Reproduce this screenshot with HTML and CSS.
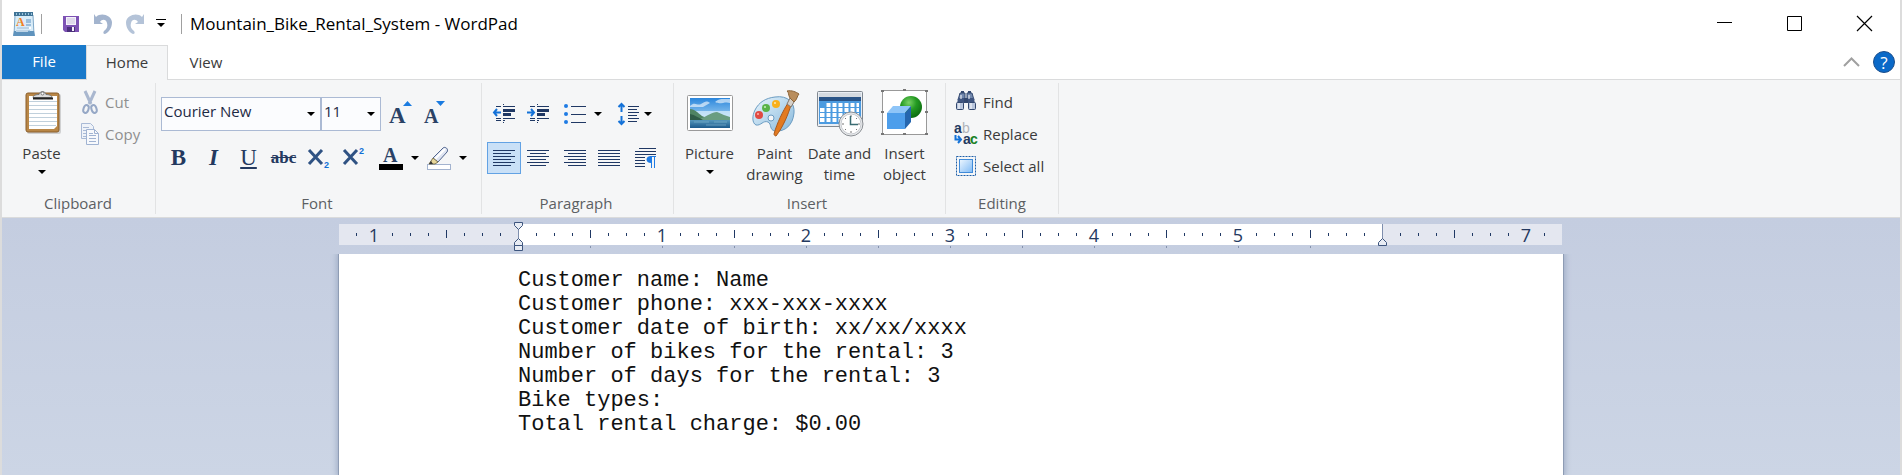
FILE: index.html
```
<!DOCTYPE html>
<html lang="en">
<head>
    <meta charset="UTF-8">
    <meta name="viewport" content="width=device-width, initial-scale=1.0">
    <title>Mountain_Bike_Rental_System - WordPad</title>
    <link rel="stylesheet" href="styles.css">
</head>
<body>
    <div class="window">
        <header class="titlebar">
            <svg class="app-icon" width="22" height="26" viewBox="0 0 22 26">
                <path d="M2 4h18l1 20H1z" fill="#d9ecf8" stroke="#7fa8c8"/>
                <path d="M1 20h20l1 5H0z" fill="#5f93bd"/>
                <rect x="1" y="1" width="19" height="4" fill="#3f7396"/>
                <path d="M3 3h1M6 3h1M9 3h1M12 3h1M15 3h1M18 3h1" stroke="#9cc4dd" stroke-width="2"/>
                <text x="3" y="15" font-family="Liberation Serif" font-weight="bold" font-size="12" fill="#f08223">A</text>
                <path d="M13 9h5M13 11h5M13 14h5" stroke="#5b8fc0"/>
                <path d="M4 17h14M3 20h12" stroke="#fff" stroke-width="2"/>
                <path d="M4 17h12M3 20h14" stroke="#7ba9cf"/>
            </svg>
            <span class="divider"></span>
            <button class="quick" aria-label="Save">
                <svg width="16" height="16" viewBox="0 0 16 16">
                    <path d="M0 0h16v16H2l-2-2z" fill="#7d52b4"/>
                    <rect x="3" y="1" width="10" height="8" fill="#f4f1fa"/>
                    <path d="M4 3h8M4 5h8M4 7h8" stroke="#c9c0dc"/>
                    <rect x="4" y="11" width="8" height="5" fill="#4b2f7c"/>
                    <rect x="9" y="11" width="2" height="4" fill="#f4f1fa"/>
                </svg>
            </button>
            <button class="quick" aria-label="Undo">
                <svg width="20" height="22" viewBox="0 0 20 22">
                    <path d="M1 1l2 3c5-5 15-2 16 5 0 6-3 10-7 12-2 0-2-2-1-3 3-2 4-5 3-8-1-4-5-4-7-1l3 2H1z" fill="#a3b4ce"/>
                </svg>
            </button>
            <button class="quick" aria-label="Redo">
                <svg width="20" height="22" viewBox="0 0 20 22">
                    <path d="M19 1l-2 3C12-1 2 2 1 9c0 6 3 10 7 12 2 0 2-2 1-3-3-2-4-5-3-8 1-4 5-4 7-1l-3 2h9z" fill="#b4c3d8"/>
                </svg>
            </button>
            <button class="quick quick-more" aria-label="Customize Quick Access Toolbar">
                <svg width="10" height="9" viewBox="0 0 10 9"><path d="M0 0h10v1H0zM1 4h8L5 8z"/></svg>
            </button>
            <span class="divider"></span>
            <h1 class="title">Mountain_Bike_Rental_System - WordPad</h1>
            <div class="window-buttons">
                <button aria-label="Minimize"><svg width="16" height="16" viewBox="0 0 16 16"><path d="M0 6.500h15" stroke="#000"/></svg></button>
                <button aria-label="Maximize"><svg width="16" height="16" viewBox="0 0 16 16"><path d="M.5.5h14v14H.5z" fill="none" stroke="#000"/></svg></button>
                <button aria-label="Close"><svg width="16" height="16" viewBox="0 0 16 16"><path d="M0 0l15 15M15 0L0 15" stroke="#000" stroke-width="1.200"/></svg></button>
            </div>
        </header>

        <nav class="tabs">
            <button class="tab tab-file">File</button>
            <button class="tab tab-active">Home</button>
            <button class="tab">View</button>
            <div class="tab-tools">
                <button aria-label="Minimize the Ribbon"><svg width="17" height="10" viewBox="0 0 17 10"><path d="M1 9l7.500-7.500L16 9" fill="none" stroke="#a0a0a0" stroke-width="2"/></svg></button>
                <button class="help" aria-label="Help">?</button>
            </div>
        </nav>

        <div class="ribbon">
            <section class="group group-clipboard">
                <div class="group-body">
                    <button class="big">
                        <svg width="48" height="48" viewBox="0 0 48 48">
                            <rect x="9" y="5" width="34" height="40" rx="2" fill="#000" opacity=".15"/>
                            <rect x="8" y="4" width="33" height="39" rx="2" fill="#b98747" stroke="#8a5f2c"/>
                            <path d="M11 7h28v30l-3 3H11z" fill="#fff"/>
                            <path d="M11 12.500h28M11 16.500h28M11 20.500h28M11 24.500h28M11 28.500h28M11 32.500h28M11 36.500h27" stroke="#c0d0dc"/>
                            <path d="M15 8.500c0-2 3-3 6-3 1-4 6-4 7 0 3 0 6 1 6 3z" fill="#ddd" stroke="#777"/>
                            <circle cx="24.500" cy="4.500" r="1.500" fill="#fff" stroke="#777"/>
                            <path d="M15 9.500h20" stroke="#222" stroke-width="2"/>
                        </svg>
                        <span>Paste</span>
                        <svg class="arrow" width="8" height="4" viewBox="0 0 8 4"><path d="M0 0h8L4 4z"/></svg>
                    </button>
                    <div class="small-list">
                        <button class="small" disabled>
                            <svg width="20" height="24" viewBox="0 0 20 24">
                                <path d="M5 1l6 13M15 1L9 14" stroke="#a9b7cf" stroke-width="3"/>
                                <ellipse cx="6" cy="19" rx="2.500" ry="4" transform="rotate(20 6 19)" fill="none" stroke="#96a8c6" stroke-width="2"/>
                                <ellipse cx="14" cy="19" rx="2.500" ry="4" transform="rotate(-20 14 19)" fill="none" stroke="#96a8c6" stroke-width="2"/>
                            </svg>
                            Cut
                        </button>
                        <button class="small" disabled>
                            <svg width="20" height="24" viewBox="0 0 20 24">
                                <path d="M1.500 1.500h9l3 3v12h-12z" fill="#eff3f9" stroke="#a9bad6"/>
                                <path d="M3 5.500h6M3 8.500h5M3 11.500h5M3 14.500h5" stroke="#a9bad6"/>
                                <path d="M6.500 7.500h8l4 4v11h-12z" fill="#f7f9fc" stroke="#a0b3d2"/>
                                <path d="M14.500 7.500v4h4" fill="none" stroke="#a0b3d2"/>
                                <path d="M9 11.500h4M9 13.500h7M9 16.500h7M9 19.500h7" stroke="#a0b3d2"/>
                            </svg>
                            Copy
                        </button>
                    </div>
                </div>
                <h2 class="group-label">Clipboard</h2>
            </section>

            <section class="group group-font">
                <div class="group-rows">
                    <div class="row">
                        <div class="combo combo-family">
                            <select aria-label="Font family"><option>Courier New</option></select>
                            <svg class="arrow" width="8" height="4" viewBox="0 0 8 4"><path d="M0 0h8L4 4z"/></svg>
                        </div>
                        <div class="combo combo-size">
                            <select aria-label="Font size"><option>11</option></select>
                            <svg class="arrow" width="8" height="4" viewBox="0 0 8 4"><path d="M0 0h8L4 4z"/></svg>
                        </div>
                        <button class="tool" aria-label="Grow font">
                            <svg width="26" height="28" viewBox="0 0 26 28">
                                <text x="1" y="23" font-family="Liberation Serif" font-weight="bold" font-size="23" fill="#2a4266">A</text>
                                <path d="M15 6h9l-4.500-5z" fill="#1a7be0"/>
                            </svg>
                        </button>
                        <button class="tool" aria-label="Shrink font">
                            <svg width="26" height="28" viewBox="0 0 26 28">
                                <text x="1" y="23" font-family="Liberation Serif" font-weight="bold" font-size="20" fill="#2a4266">A</text>
                                <path d="M13 1h9l-4.500 5z" fill="#1a7be0"/>
                            </svg>
                        </button>
                    </div>
                    <div class="row">
                        <button class="tool letter bold">B</button>
                        <button class="tool letter italic">I</button>
                        <button class="tool letter underline">U</button>
                        <button class="tool letter strike">abc</button>
                        <button class="tool" aria-label="Subscript">
                            <svg width="24" height="26" viewBox="0 0 24 26">
                                <path d="M2 5l13 14M15 5L2 19" stroke="#2f5283" stroke-width="3"/>
                                <text x="17" y="23" font-family="Liberation Sans" font-weight="bold" font-size="9" fill="#0f6fd6">2</text>
                            </svg>
                        </button>
                        <button class="tool" aria-label="Superscript">
                            <svg width="24" height="26" viewBox="0 0 24 26">
                                <path d="M2 5l13 14M15 5L2 19" stroke="#2f5283" stroke-width="3"/>
                                <text x="17" y="9" font-family="Liberation Sans" font-weight="bold" font-size="9" fill="#0f6fd6">2</text>
                            </svg>
                        </button>
                        <button class="split split-color" aria-label="Text color">
                            <svg width="24" height="26" viewBox="0 0 24 26">
                                <text x="4" y="17" font-family="Liberation Serif" font-weight="bold" font-size="20" fill="#2a4266">A</text>
                                <rect y="19" width="24" height="6"/>
                            </svg>
                            <svg class="arrow" width="8" height="4" viewBox="0 0 8 4"><path d="M0 0h8L4 4z"/></svg>
                        </button>
                        <button class="split" aria-label="Text highlight color">
                            <svg width="24" height="26" viewBox="0 0 24 26">
                                <rect x=".5" y="19.500" width="23" height="5" fill="#fff" stroke="#a3b3cf"/>
                                <path d="M6 13L16 3c2-2 6 1 4 4l-9 10z" fill="#dfe5f2" stroke="#51658f"/>
                                <path d="M8 14L18 4" stroke="#fff" stroke-width="2"/>
                                <path d="M6 13l5 4-3 2H2z" fill="#e8d79a" stroke="#7a7350"/>
                                <path d="M2 19l2-3 2 3z" fill="#333"/>
                            </svg>
                            <svg class="arrow" width="8" height="4" viewBox="0 0 8 4"><path d="M0 0h8L4 4z"/></svg>
                        </button>
                    </div>
                </div>
                <h2 class="group-label">Font</h2>
            </section>

            <section class="group group-paragraph">
                <div class="group-rows">
                    <div class="row">
                        <button class="tool" aria-label="Decrease indent">
                            <svg width="22" height="20" viewBox="0 0 22 20">
                                <path d="M3 2.500h5M10 2.500h12M10 14.500h12M3 14.500h5M3 16.500h5M10 16.500h2M10 .5h1M10 18.500h1" stroke="#1f3864"/>
                                <path d="M10 5h12v3H10zM10 9h8v3h-8z" fill="#1f3864"/>
                                <path d="M8 8.500H1M4 5L1 8.500 4 12" fill="none" stroke="#1472d8" stroke-width="2"/>
                            </svg>
                        </button>
                        <button class="tool" aria-label="Increase indent">
                            <svg width="22" height="20" viewBox="0 0 22 20">
                                <path d="M3 2.500h5M10 2.500h12M10 14.500h12M3 14.500h5M3 16.500h5M10 16.500h2M10 .5h1M10 18.500h1" stroke="#1f3864"/>
                                <path d="M10 5h12v3H10zM10 9h8v3h-8z" fill="#1f3864"/>
                                <path d="M0 8.500h7M4 5l3 3.500L4 12" fill="none" stroke="#1472d8" stroke-width="2"/>
                            </svg>
                        </button>
                        <button class="split split-list" aria-label="Start a list">
                            <svg width="22" height="20" viewBox="0 0 22 20">
                                <path d="M7 2.500h15M7 10.500h15M7 18.500h15" stroke="#1f3864"/>
                                <g fill="#1e7be4"><circle cx="2" cy="2" r="2"/><circle cx="2" cy="10" r="2"/><circle cx="2" cy="18" r="2"/></g>
                            </svg>
                            <svg class="arrow" width="8" height="4" viewBox="0 0 8 4"><path d="M0 0h8L4 4z"/></svg>
                        </button>
                        <button class="split split-spacing" aria-label="Line spacing">
                            <svg width="22" height="22" viewBox="0 0 22 22">
                                <path d="M10 3.500h11M10 6.500h9M10 9.500h11M10 12.500h9M10 15.500h11M10 18.500h9" stroke="#1f3864"/>
                                <path d="M3.500 9V1M.5 4l3-3 3 3M3.500 13v8M.5 18l3 3 3-3" fill="none" stroke="#1472d8" stroke-width="2"/>
                            </svg>
                            <svg class="arrow" width="8" height="4" viewBox="0 0 8 4"><path d="M0 0h8L4 4z"/></svg>
                        </button>
                    </div>
                    <div class="row">
                        <button class="tool pressed" aria-label="Align left">
                            <svg width="22" height="18" viewBox="0 0 22 18"><path d="M0 1.500h22M0 4.500h18M0 7.500h22M0 10.500h18M0 13.500h22M0 16.500h18" stroke="#1f3864"/></svg>
                        </button>
                        <button class="tool" aria-label="Center">
                            <svg width="22" height="18" viewBox="0 0 22 18"><path d="M0 1.500h22M3 4.500h16M0 7.500h22M3 10.500h16M0 13.500h22M3 16.500h16" stroke="#1f3864"/></svg>
                        </button>
                        <button class="tool tool-apart" aria-label="Align right">
                            <svg width="22" height="18" viewBox="0 0 22 18"><path d="M0 1.500h22M4 4.500h18M0 7.500h22M4 10.500h18M0 13.500h22M4 16.500h18" stroke="#1f3864"/></svg>
                        </button>
                        <button class="tool" aria-label="Justify">
                            <svg width="22" height="18" viewBox="0 0 22 18"><path d="M0 1.500h22M0 4.500h22M0 7.500h22M0 10.500h22M0 13.500h22M0 16.500h22" stroke="#1f3864"/></svg>
                        </button>
                        <button class="tool tool-apart" aria-label="Paragraph">
                            <svg width="22" height="22" viewBox="0 0 22 22">
                                <path d="M4 1.500h17M0 4.500h21M0 7.500h21M0 10.500h10M0 13.500h10M0 16.500h10M0 19.500h10" stroke="#1f3864"/>
                                <path d="M21 9.500h-6" stroke="#1e7be4"/><path d="M16.500 9v12M19.500 9v12" stroke="#1e7be4"/>
                                <path d="M16 9v7c-6 0-6-7 0-7z" fill="#1e7be4"/>
                            </svg>
                        </button>
                    </div>
                </div>
                <h2 class="group-label">Paragraph</h2>
            </section>

            <section class="group group-insert">
                <div class="group-body">
                    <button class="big">
                        <svg width="48" height="48" viewBox="0 0 48 48">
                            <defs>
                                <linearGradient id="sky" x1="0" y1="0" x2="0" y2="1"><stop offset="0" stop-color="#2a86dc"/><stop offset="1" stop-color="#d5f0fb"/></linearGradient>
                                <linearGradient id="sea" x1="0" y1="0" x2="0" y2="1"><stop offset="0" stop-color="#5d9fc2"/><stop offset="1" stop-color="#1c5a8c"/></linearGradient>
                            </defs>
                            <rect x="1.500" y="6.500" width="45" height="35" rx="1" fill="#fff" stroke="#9a9a9a"/>
                            <rect x="4" y="9" width="40" height="30" fill="url(#sky)"/>
                            <path d="M4 17c5-5 7 0 11-2s5-4 9-1l-7 4H4zM29 13c4-4 8-3 15-3v4c-5-2-10 2-15-1z" fill="#fff" opacity=".6"/>
                            <path d="M4 22h40v7H4z" fill="#eefaff" opacity=".6"/>
                            <rect x="4" y="30" width="40" height="9" fill="url(#sea)"/>
                            <path d="M4 20c5 0 8 4 12 7l9 4H4z" fill="#4f8463"/>
                            <path d="M14 30c7-3 12-7 17-7 5 2 9 4 13 5v3H14z" fill="#6a9d80"/>
                            <path d="M4 25c5 1 9 4 13 6H4z" fill="#2f5c48"/>
                            <path d="M8 33h15M20 36h20M28 33h13" stroke="#86bad2" opacity=".6"/>
                        </svg>
                        <span>Picture</span>
                        <svg class="arrow" width="8" height="4" viewBox="0 0 8 4"><path d="M0 0h8L4 4z"/></svg>
                    </button>
                    <button class="big">
                        <svg width="48" height="48" viewBox="0 0 48 48">
                            <defs><linearGradient id="palette" x1="0" y1="0" x2="1" y2="1"><stop offset="0" stop-color="#eaf6fd"/><stop offset="1" stop-color="#86b8dc"/></linearGradient></defs>
                            <path d="M24 8c13-2 20 6 19 16-1 12-9 19-19 18-6-1-3-7-7-9-5-2-7 4-12 3-4-2-4-9-1-15C8 13 15 9 24 8z" fill="url(#palette)" stroke="#6b9cc2"/>
                            <circle cx="20" cy="29" r="3" fill="#f5f6f8" stroke="#6b9cc2"/>
                            <circle cx="8" cy="26" r="4" fill="#e04a42"/><circle cx="7" cy="25" r="1" fill="#ffb5ae"/>
                            <circle cx="15" cy="19" r="4" fill="#58b348"/><circle cx="14" cy="18" r="1" fill="#c8efbd"/>
                            <circle cx="25" cy="15" r="4" fill="#f8b01c"/><circle cx="24" cy="14" r="1" fill="#ffeab0"/>
                            <path d="M37 14l3 2c-3 10-8 22-15 31-1 0-2-1-2-2 3-11 9-23 14-31z" fill="#e27a20" stroke="#a9581b"/>
                            <path d="M36 15l4 3 3-5-4-4z" fill="#d6d0c8" stroke="#80756b"/>
                            <path d="M39 9c-2-3-1-6-3-7 5-1 9 1 12 3-2 2-2 6-5 8z" fill="#b98d5c" stroke="#8b6439"/>
                        </svg>
                        <span>Paint<br>drawing</span>
                    </button>
                    <button class="big">
                        <svg width="48" height="48" viewBox="0 0 48 48">
                            <rect x="1.500" y="2.500" width="45" height="35" rx="1" fill="#e9eef4" stroke="#808890"/>
                            <rect x="3" y="4" width="42" height="4" fill="#d4dae1"/>
                            <rect x="3" y="8" width="42" height="4" fill="#295488"/>
                            <rect x="3" y="12" width="42" height="23" fill="#4c9be0"/>
                            <path d="M10 16h33M4 21h39M4 26h39M4 31h39" stroke="#fff" stroke-width="4"/>
                            <path d="M9.500 13v22M15.500 13v22M21.500 13v22M27.500 13v22M33.500 13v22M39.500 13v22" stroke="#4c9be0" stroke-width="2"/>
                            <circle cx="35" cy="35" r="12" fill="#e8eaec" stroke="#8b8f94"/>
                            <circle cx="35" cy="35" r="10" fill="#fff" stroke="#c8cbd0"/>
                            <path d="M35 26v2M35 42v2M26 35h2M42 35h2M29 29l1 1M41 29l-1 1M29 41l1-1M41 41l-1-1" stroke="#777"/>
                            <path d="M34.500 27v8.500H42" fill="none" stroke="#3a6b72" stroke-width="1.500"/>
                        </svg>
                        <span>Date and<br>time</span>
                    </button>
                    <button class="big">
                        <svg width="48" height="48" viewBox="0 0 48 48">
                            <defs><radialGradient id="ball" cx=".4" cy=".3" r=".7"><stop offset="0" stop-color="#7bd267"/><stop offset=".5" stop-color="#249a22"/><stop offset="1" stop-color="#0e6e12"/></radialGradient></defs>
                            <rect x="1.500" y="1.500" width="44" height="44" fill="#fff" stroke="#999"/>
                            <path d="M0 1h3v2H0zM22 0h3v2h-3zM44 1h3v2h-3zM0 22h3v2H0zM44 22h3v2h-3zM0 44h3v2H0zM22 44h3v2h-3zM44 44h3v2h-3z" fill="#777"/>
                            <circle cx="30" cy="18" r="11" fill="url(#ball)"/>
                            <path d="M6 24l6-7h18l-6 7z" fill="#8ec5f8"/>
                            <path d="M6 24h18v16H6z" fill="#4d9eeb"/>
                            <path d="M24 24l6-7v16l-6 7z" fill="#2566ae"/>
                        </svg>
                        <span>Insert<br>object</span>
                    </button>
                </div>
                <h2 class="group-label">Insert</h2>
            </section>

            <section class="group group-editing">
                <div class="group-body">
                    <div class="small-list">
                        <button class="small">
                            <svg width="24" height="24" viewBox="0 0 24 24">
                                <path d="M6 3h5v7H4zM13 3h5l2 7h-7z" fill="#7288ad" stroke="#33486f"/>
                                <path d="M7 1h3v2H7zM14 1h3v2h-3zM10 8h4v5h-4z" fill="#33486f"/>
                                <path d="M4 8h6v6H3zM14 8h6l1 6h-7z" fill="#3f5580"/>
                                <rect x="2.500" y="12.500" width="7" height="7" rx="1" fill="#b9c6dd" stroke="#33486f"/>
                                <rect x="14.500" y="12.500" width="7" height="7" rx="1" fill="#b9c6dd" stroke="#33486f"/>
                                <path d="M5 13v6M17 13v6M7 5v4M15 5v4" stroke="#fff"/>
                            </svg>
                            Find
                        </button>
                        <button class="small">
                            <svg width="24" height="28" viewBox="0 0 24 28" font-family="Liberation Sans" font-weight="bold" font-size="14">
                                <text x="0" y="13" fill="#24395f">a</text>
                                <text x="8" y="13" fill="#b0b3b9" font-weight="normal">b</text>
                                <text x="9" y="24" fill="#24395f">a</text>
                                <text x="16" y="24" fill="#188024">c</text>
                                <path d="M1.500 15v4.500H7M4 16l3 3.500L4 23" fill="none" stroke="#1472d8" stroke-width="2"/>
                            </svg>
                            Replace
                        </button>
                        <button class="small">
                            <svg width="24" height="24" viewBox="0 0 24 24">
                                <defs><linearGradient id="selection" x1="0" y1="0" x2="1" y2="1"><stop offset="0" stop-color="#eef7ff"/><stop offset="1" stop-color="#7fbaf5"/></linearGradient></defs>
                                <rect x="2.500" y="2.500" width="19" height="19" fill="none" stroke="#1d5fa8" stroke-dasharray="2 1"/>
                                <rect x="5.500" y="5.500" width="13" height="13" fill="url(#selection)" stroke="#3f8ad8"/>
                            </svg>
                            Select all
                        </button>
                    </div>
                </div>
                <h2 class="group-label">Editing</h2>
            </section>
        </div>

        <main class="workspace">
            <div class="ruler">
                <svg width="1224" height="35" viewBox="0 0 1224 35">
                    <defs>
                        <!-- one inch is 144 units, origin at the left margin -->
                        <pattern id="inch" x="179" width="144" height="35" patternUnits="userSpaceOnUse">
                            <path d="M18.500 14v3M36.500 14v3M54.500 14v3M72.500 11v8M90.500 14v3M108.500 14v3M126.500 14v3" stroke="#1f3864"/>
                        </pattern>
                        <pattern id="tabstops" x="179" width="72" height="35" patternUnits="userSpaceOnUse">
                            <path d="M.5 27v2" stroke="#8492ad"/>
                        </pattern>
                    </defs>
                    <rect y="5" width="1223" height="21" fill="#e4e7f0"/>
                    <rect x="179" y="5" width="864" height="21" fill="#fff"/>
                    <rect x="8" y="5" width="1206" height="21" fill="url(#inch)"/>
                    <rect x="200" y="26" width="830" height="5" fill="url(#tabstops)"/>
                    <g class="ruler-numbers">
                        <text x="35" y="23">1</text>
                        <text x="323" y="23">1</text>
                        <text x="467" y="23">2</text>
                        <text x="611" y="23">3</text>
                        <text x="755" y="23">4</text>
                        <text x="899" y="23">5</text>
                        <text x="1187" y="23">7</text>
                    </g>
                    <path d="M179.500 9v12M1043.500 5v16" stroke="#7f8fae"/>
                    <g fill="#e8ecf4" stroke="#3d557e">
                        <path d="M175.500 3.500h8v3l-4 4-4-4z"/>
                        <path d="M175.500 26.500v-3l4-4 4 4v3z"/>
                        <path d="M175.500 26.500h8v5h-8z"/>
                        <path d="M1039.500 26.500v-3l4-4 4 4v3z"/>
                    </g>
                </svg>
            </div>
            <article class="page" contenteditable="true" spellcheck="false">
                <p>Customer name: Name</p>
                <p>Customer phone: xxx-xxx-xxxx</p>
                <p>Customer date of birth: xx/xx/xxxx</p>
                <p>Number of bikes for the rental: 3</p>
                <p>Number of days for the rental: 3</p>
                <p>Bike types:</p>
                <p>Total rental charge: $0.00</p>
            </article>
        </main>
    </div>
</body>
</html>
```

FILE: styles.css
```
* {
    box-sizing: border-box;
}
body {
    margin: 0;
    font-family: "Open Sans", "Noto Sans", sans-serif;
    font-size: 15px;
    color: #3b3b3b;
    background: #fff;
}
button {
    display: flex;
    align-items: center;
    justify-content: center;
    padding: 0;
    border: none;
    background: none;
    font: inherit;
    color: inherit;
}
svg {
    display: block;
    flex: none;
    overflow: visible;
}
.window {
    display: flex;
    flex-direction: column;
    height: 100vh;
    overflow: hidden;
    border-left: 2px solid #dcdcdc;
    border-right: 2px solid #dcdcdc;
}

/* title bar */
.titlebar {
    display: flex;
    align-items: center;
    height: 45px;
    padding: 2px 0 0 11px;
}
.divider {
    width: 1px;
    height: 20px;
    background: #a0a0a0;
}
.app-icon {
    margin-right: 6px;
}
.quick {
    width: 32px;
}
.divider + .quick {
    margin-left: 13px;
}
.quick-more {
    width: 20px;
    margin-right: 10px;
}
.title {
    flex: 1;
    margin: 0;
    padding-left: 8px;
    font-size: 17px;
    font-weight: normal;
    line-height: 24px;
    color: #000;
}
.window-buttons {
    display: flex;
}
.window-buttons button {
    width: 70px;
    height: 40px;
}

/* tabs */
.tabs {
    display: flex;
    height: 35px;
    border-bottom: 1px solid #dadbdc;
}
.tab {
    width: 76px;
    height: 35px;
    padding-bottom: 2px;
}
.tab-file {
    width: 84px;
    height: 34px;
    background: #1979ca;
    color: #fff;
}
.tab-active {
    width: 82px;
    border: 1px solid #dadbdc;
    border-bottom: none;
    background: #f5f6f7;
}
.tab-tools {
    display: flex;
    align-items: center;
    gap: 13px;
    margin-left: auto;
    padding-right: 5px;
}
.help {
    width: 22px;
    height: 22px;
    border-radius: 50%;
    border: 1px solid #1d4f8c;
    background: #0a69c8;
    color: #fff;
    font-size: 17px;
}

/* ribbon */
.ribbon {
    display: flex;
    height: 138px;
    flex: none;
    padding: 3px 0;
    background: #f5f6f7;
    border-bottom: 1px solid #dadbdc;
}
.group {
    display: flex;
    flex-direction: column;
    border-right: 1px solid #e2e3e4;
}
.group-clipboard {
    width: 154px;
    padding-left: 7px;
}
.group-font {
    width: 326px;
    padding-left: 5px;
}
.group-paragraph {
    width: 192px;
    padding-left: 5px;
}
.group-insert {
    width: 272px;
    padding-left: 3px;
}
.group-editing {
    width: 113px;
    padding-left: 8px;
}
.group-body {
    display: flex;
    flex: 1;
    padding-top: 3px;
}
.group-label {
    margin: 0;
    padding-right: 8px;
    font-size: 15px;
    font-weight: normal;
    line-height: 22px;
    text-align: center;
    color: #5c5f63;
}
.big {
    flex-direction: column;
    justify-content: flex-start;
    width: 65px;
    padding-top: 3px;
    line-height: 21px;
}
.big span {
    margin-top: 6px;
}
.big .arrow {
    margin-top: 6px;
}
.small-list {
    display: flex;
    flex-direction: column;
}
.group-clipboard .small-list {
    margin-left: 6px;
}
.small {
    justify-content: flex-start;
    gap: 5px;
    height: 32px;
    white-space: nowrap;
}
.small:disabled {
    color: #8f8f8f;
}
.group-rows {
    display: flex;
    flex: 1;
    flex-direction: column;
    gap: 11px;
    padding-top: 14px;
}
.row {
    display: flex;
    align-items: center;
    height: 32px;
}
.row:first-child {
    height: 34px;
}
.combo {
    display: grid;
    align-items: center;
    height: 34px;
    border: 1px solid #abbad4;
    background: #fbfcfe;
}
.combo select,
.combo .arrow {
    grid-area: 1 / 1;
}
.combo .arrow {
    justify-self: end;
    margin-right: 5px;
    pointer-events: none;
}
.combo select {
    appearance: none;
    height: 32px;
    padding: 0 0 6px 2px;
    border: none;
    background: none;
    font: inherit;
    color: #1e2a44;
}
.combo-family {
    width: 160px;
}
.combo-size {
    width: 60px;
    margin-right: 2px;
}
.tool {
    width: 35px;
    height: 32px;
}
.letter {
    font-family: "Liberation Serif", serif;
    font-size: 23px;
    color: #24395f;
}
.bold {
    font-weight: bold;
}
.italic {
    font-weight: bold;
    font-style: italic;
}
.underline {
    text-decoration: underline;
}
.strike {
    font-size: 17px;
    font-weight: bold;
    text-decoration: line-through;
}
.split {
    display: flex;
    gap: 8px;
    width: 48px;
    height: 32px;
}
.split-color {
    margin-left: 4px;
}
.group-paragraph .tool {
    width: 34px;
}
.group-paragraph .tool-apart {
    margin-left: 3px;
}
.group-paragraph .pressed {
    border: 1px solid #62a2e4;
    background: #c9e0f7;
}
.split-list {
    width: 56px;
}
.split-spacing {
    gap: 4px;
}

/* document area */
.workspace {
    display: flex;
    flex: 1;
    flex-direction: column;
    align-items: center;
    background: linear-gradient(#c4cde0, #ccd5e5);
}
.ruler {
    height: 36px;
    flex: none;
    padding-top: 1px;
}
.ruler-numbers {
    font-size: 18px;
    fill: #24395f;
    text-anchor: middle;
}
.page {
    flex: 1;
    width: 1224px;
    padding: 15px 179px 0;
    background: #fff;
    box-shadow: 0 0 0 1px #8e9cb4, 0 0 6px 2px #9dabc4;
    clip-path: inset(0 -10px);
    font-family: "Liberation Mono", "Courier New", monospace;
    font-size: 22px;
    line-height: 24px;
    color: #111;
}
.page p {
    margin: 0;
}
```
